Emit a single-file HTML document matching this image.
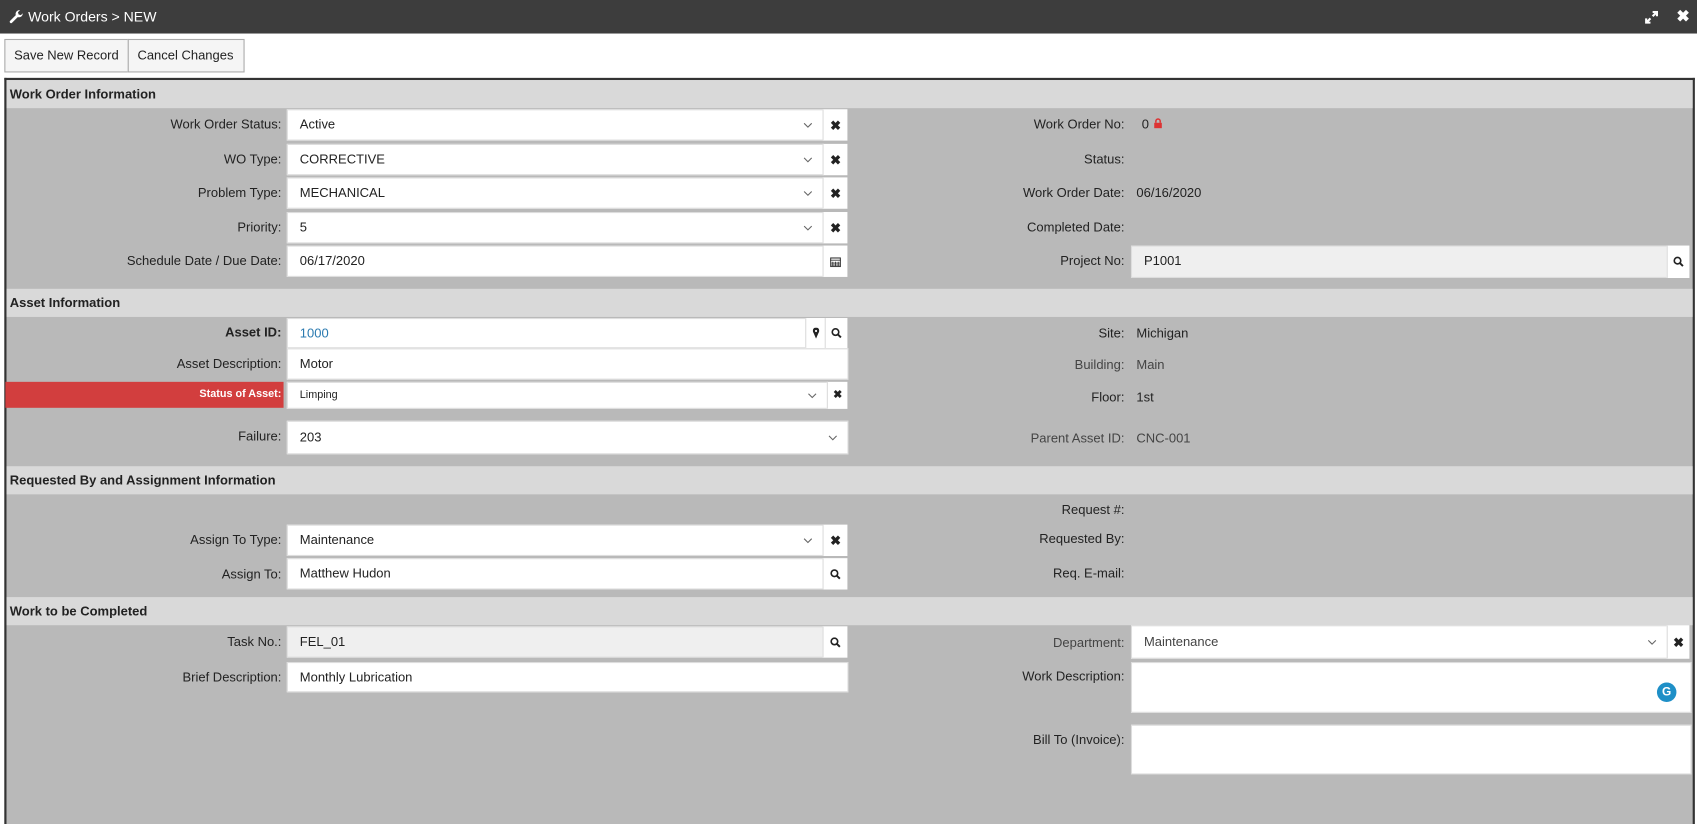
<!DOCTYPE html>
<html><head><style>
*{box-sizing:border-box;margin:0;padding:0}
html,body{width:1697px;height:808px;overflow:hidden;background:#fff;font-family:"Liberation Sans",Arial,sans-serif}
#w{position:absolute;left:0;top:0;width:1568px;height:747px;transform:scale(1.08227,1.0817);transform-origin:0 0;font-size:12px;color:#222}
.a{position:absolute}
.tb{left:0;top:0;width:1568px;height:31px;background:#3d3d3d;color:#fff;font-size:13px;line-height:31px;padding-left:26px}
.btn{top:36px;height:31px;background:#f5f5f5;border:1px solid #aaa;line-height:29px;padding:0 8px;font-size:12px;color:#222}
.panel{left:4px;top:72px;width:1562px;height:690px;border:2px solid #333;border-bottom:none;background:#b9b9b9}
.hd{left:6px;width:1558px;height:26px;background:#d9d9d9;font-weight:bold;line-height:26px;padding-left:3px;font-size:12px}
.lb{text-align:right;width:260px;left:0}
.rl{text-align:right;width:1039px;left:0}
.v{left:1050px}
.in{background:#fff;border:1px solid #ddd;line-height:27px;padding-left:11px}
.ib{background:#fff;border-left:1px solid #ddd;display:flex;align-items:center;justify-content:center;font-weight:bold}
.car{position:absolute;right:9px;top:50%;margin-top:-3px;width:9px;height:6px}
</style></head><body><div id="w">
<svg width="0" height="0" style="position:absolute"><defs>
<symbol id="mag" viewBox="0 0 10 10"><circle cx="4" cy="4" r="3" stroke="#222" stroke-width="1.5" fill="none"/><path d="M6.2 6.2L9 9" stroke="#222" stroke-width="1.8"/></symbol>
<symbol id="chv" viewBox="0 0 9 6"><path d="M1 1l3.5 3.5L8 1" stroke="#666" stroke-width="1" fill="none"/></symbol>
</defs></svg>
<div class="a tb">Work Orders &gt; NEW</div>
<svg class="a" style="left:8px;top:9px" width="14" height="14" viewBox="0 0 14 14"><path d="M13 3.5a3.5 3.5 0 0 1-4.6 3.3L3 12.2a1.3 1.3 0 0 1-1.8-1.8l5.4-5.4A3.5 3.5 0 0 1 10.5.4L8.6 2.3l.6 2.1 2.1.6 1.9-1.9z" fill="#fff"/></svg>
<svg class="a" style="left:1520px;top:10px" width="12" height="12" viewBox="0 0 12 12"><path d="M1 11l4-4M11 1L7 5M7 1h4v4M1 7v4h4" stroke="#fff" stroke-width="2" fill="none"/></svg>
<div class="a" style="left:1549px;top:6px;color:#fff;font-weight:bold;font-size:15px">✖</div>
<div class="a btn" style="left:4px;width:115px">Save New Record</div>
<div class="a btn" style="left:118px;width:108px">Cancel Changes</div>
<div class="a panel"></div>
<div class="a hd" style="top:74px">Work Order Information</div>
<div class="a hd" style="top:267px">Asset Information</div>
<div class="a hd" style="top:431px">Requested By and Assignment Information</div>
<div class="a hd" style="top:552px">Work to be Completed</div>

<div class="a lb" style="top:108px">Work Order Status:</div>
<div class="a in" style="left:265px;top:101px;width:496px;height:29px">Active<svg class="car"><use href="#chv"/></svg></div>
<div class="a ib" style="left:760px;top:101px;width:23px;height:29px">✖</div>
<div class="a lb" style="top:140px">WO Type:</div>
<div class="a in" style="left:265px;top:133px;width:496px;height:29px">CORRECTIVE<svg class="car"><use href="#chv"/></svg></div>
<div class="a ib" style="left:760px;top:133px;width:23px;height:29px">✖</div>
<div class="a lb" style="top:171px">Problem Type:</div>
<div class="a in" style="left:265px;top:164px;width:496px;height:29px">MECHANICAL<svg class="car"><use href="#chv"/></svg></div>
<div class="a ib" style="left:760px;top:164px;width:23px;height:29px">✖</div>
<div class="a lb" style="top:203px">Priority:</div>
<div class="a in" style="left:265px;top:196px;width:496px;height:29px">5<svg class="car"><use href="#chv"/></svg></div>
<div class="a ib" style="left:760px;top:196px;width:23px;height:29px">✖</div>
<div class="a lb" style="top:234px">Schedule Date / Due Date:</div>
<div class="a in" style="left:265px;top:227px;width:496px;height:29px">06/17/2020</div>
<div class="a ib" style="left:760px;top:227px;width:23px;height:29px"><svg width="10" height="10" viewBox="0 0 10 10"><rect x="0.5" y="1.5" width="9" height="8" fill="none" stroke="#333"/><path d="M0 3.5h10M2.5 5v4M5 5v4M7.5 5v4M1 6.2h8M1 8h8" stroke="#333" stroke-width=".8"/></svg></div>

<div class="a rl" style="top:108px">Work Order No:</div>
<div class="a" style="left:1055px;top:108px">0</div>
<svg class="a" style="left:1066px;top:109px" width="8" height="10" viewBox="0 0 8 10"><path d="M2 4.5V3a2 2 0 0 1 4 0v1.5" stroke="#d33" stroke-width="1.4" fill="none"/><rect x="0.5" y="4.5" width="7" height="5" fill="#d33"/></svg>
<div class="a rl" style="top:140px">Status:</div>
<div class="a rl" style="top:171px">Work Order Date:</div><div class="a v" style="top:171px">06/16/2020</div>
<div class="a rl" style="top:203px">Completed Date:</div>
<div class="a rl" style="top:234px">Project No:</div>
<div class="a in" style="left:1045px;top:227px;width:496px;height:30px;background:#efefef">P1001</div>
<div class="a ib" style="left:1540px;top:227px;width:21px;height:30px"><svg width="10" height="10"><use href="#mag"/></svg></div>

<div class="a lb" style="top:300px;font-weight:bold">Asset ID:</div>
<div class="a in" style="left:265px;top:294px;width:480px;height:28px;color:#2a7ab0">1000</div>
<div class="a ib" style="left:744px;top:294px;width:19px;height:28px"><svg width="6" height="10" viewBox="0 0 6 10"><path d="M3 10L.6 4.5A3 3 0 1 1 5.4 4.5z" fill="#222"/><circle cx="3" cy="3" r="1" fill="#fff"/></svg></div>
<div class="a ib" style="left:762px;top:294px;width:21px;height:28px"><svg width="10" height="10"><use href="#mag"/></svg></div>
<div class="a lb" style="top:329px">Asset Description:</div>
<div class="a in" style="left:265px;top:322px;width:519px;height:29px">Motor</div>
<div class="a" style="left:5px;top:353px;width:257px;height:24px;background:#d23e3e"></div>
<div class="a lb" style="top:359px;color:#fff;font-weight:bold;font-size:10px">Status of Asset:</div>
<div class="a in" style="left:265px;top:353px;width:500px;height:25px;line-height:24px;font-size:10px">Limping<svg class="car"><use href="#chv"/></svg></div>
<div class="a ib" style="left:764px;top:353px;width:19px;height:25px;font-size:10px">✖</div>
<div class="a lb" style="top:396px">Failure:</div>
<div class="a in" style="left:265px;top:389px;width:519px;height:31px;line-height:29px">203<svg class="car"><use href="#chv"/></svg></div>

<div class="a rl" style="top:301px">Site:</div><div class="a v" style="top:301px">Michigan</div>
<div class="a rl" style="top:330px;color:#444">Building:</div><div class="a v" style="top:330px;color:#444">Main</div>
<div class="a rl" style="top:360px">Floor:</div><div class="a v" style="top:360px">1st</div>
<div class="a rl" style="top:398px;color:#444">Parent Asset ID:</div><div class="a v" style="top:398px;color:#444">CNC-001</div>

<div class="a rl" style="top:464px">Request #:</div>
<div class="a lb" style="top:492px">Assign To Type:</div>
<div class="a in" style="left:265px;top:485px;width:496px;height:29px">Maintenance<svg class="car"><use href="#chv"/></svg></div>
<div class="a ib" style="left:760px;top:485px;width:23px;height:29px">✖</div>
<div class="a rl" style="top:491px">Requested By:</div>
<div class="a lb" style="top:524px">Assign To:</div>
<div class="a in" style="left:265px;top:516px;width:496px;height:29px">Matthew Hudon</div>
<div class="a ib" style="left:760px;top:516px;width:23px;height:29px"><svg width="10" height="10"><use href="#mag"/></svg></div>
<div class="a rl" style="top:523px">Req. E-mail:</div>

<div class="a lb" style="top:586px">Task No.:</div>
<div class="a in" style="left:265px;top:579px;width:496px;height:29px;background:#efefef">FEL_01</div>
<div class="a ib" style="left:760px;top:579px;width:23px;height:29px"><svg width="10" height="10"><use href="#mag"/></svg></div>
<div class="a lb" style="top:619px">Brief Description:</div>
<div class="a in" style="left:265px;top:612px;width:519px;height:28px">Monthly Lubrication</div>
<div class="a rl" style="top:587px;color:#444">Department:</div>
<div class="a in" style="left:1045px;top:578px;width:496px;height:31px;line-height:29px;color:#444">Maintenance<svg class="car"><use href="#chv"/></svg></div>
<div class="a ib" style="left:1540px;top:578px;width:21px;height:31px">✖</div>
<div class="a rl" style="top:618px">Work Description:</div>
<div class="a in" style="left:1045px;top:612px;width:518px;height:47px"></div>
<div class="a" style="left:1531px;top:631px;width:18px;height:18px;border-radius:50%;background:#1e8fc7;color:#fff;font-size:11px;font-weight:bold;text-align:center;line-height:18px">G</div>
<div class="a rl" style="top:677px">Bill To (Invoice):</div>
<div class="a in" style="left:1045px;top:670px;width:518px;height:46px"></div>
</div></body></html>
